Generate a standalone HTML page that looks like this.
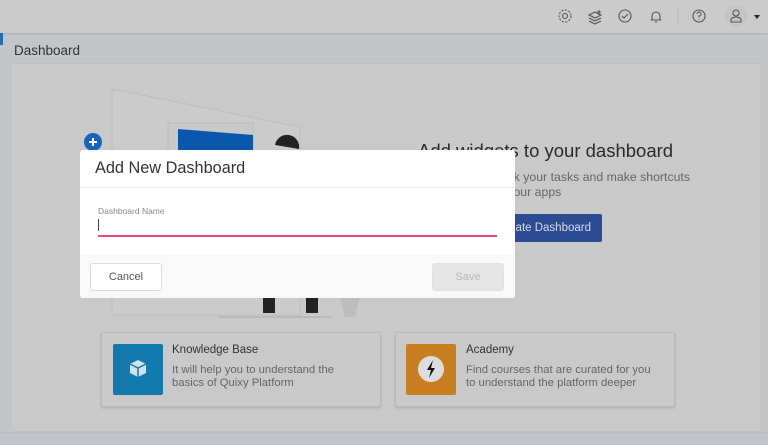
<!DOCTYPE html>
<html><head><meta charset="utf-8"><style>
*{margin:0;padding:0;box-sizing:border-box}
body{width:768px;height:445px;overflow:hidden;background:#c3c6c9;font-family:"Liberation Sans",sans-serif;position:relative}
.abs{position:absolute}
.hdr{left:0;top:0;width:768px;height:33px;background:#cbcbcb;box-shadow:0 1px 2px rgba(0,0,0,.12)}
.card{left:10px;top:63px;width:752px;height:369px;background:#c9c9c9;border:1px solid #c0c0c0;border-radius:3px}
.t{color:#333}
.tile{background:#c9c9c9;border:1px solid #b9b9b9;box-shadow:0 1px 2px rgba(0,0,0,.15);border-radius:2px}
.dlg{left:80px;top:150px;width:435px;height:148px;background:#fff;border-radius:3px}
</style></head><body>
<div class="abs hdr"></div>
<div class="abs" style="left:0;top:33px;width:3px;height:12px;background:#1f6fb5"></div>
<svg class="abs" style="left:550px;top:6px" width="218" height="22" viewBox="0 0 218 22" fill="none" stroke="#555" stroke-width="1.1">
<circle cx="15" cy="10" r="6" stroke-dasharray="2 1.5"/><circle cx="15" cy="10" r="2.5"/>
<path d="M39 9l6-3 6 3-6 3z M39 12l6 3 6-3 M39 15l6 3 6-3 M49 4v5 M47 6h4"/>
<circle cx="75" cy="10" r="6"/><path d="M72 10l2 2 4-4"/>
<path d="M101 14h10 M102 14v-4a4 4 0 0 1 8 0v4 M105 16h2"/>
<path d="M128 3v15" stroke="#bbb"/>
<circle cx="149" cy="10" r="6"/><path d="M147 8a2 2 0 1 1 2 2v1.5 M149 13v.5"/>
<circle cx="186" cy="10" r="11" fill="#c4c4c4" stroke="none"/>
<circle cx="186" cy="7" r="3"/><path d="M181 16v-2a5 3 0 0 1 10 0v2z"/>
<path d="M204 9h6l-3 4z" fill="#222" stroke="none"/>
</svg>
<div class="abs t" style="left:14px;top:43px;font-size:13.5px">Dashboard</div>
<div class="abs card"></div>
<svg class="abs" style="left:80px;top:85px" width="330" height="240">
<path d="M32 4 L220 42 L220 230 L32 230 Z" fill="#cbcbcb" stroke="#bdbdbd"/>
<rect x="88" y="38" width="85" height="60" fill="#c9c9c9" stroke="#bbb"/>
<path d="M98 44 L173 50 L173 70 L98 70Z" fill="#0b57ad"/>
<circle cx="13" cy="57" r="9" fill="#1565c0"/><path d="M9 57h8M13 53v8" stroke="#fff" stroke-width="2"/>
<path d="M195 60a12 12 0 0 1 24 4z" fill="#222"/>
<rect x="183" y="213" width="12" height="15" fill="#222"/><rect x="226" y="213" width="12" height="15" fill="#222"/>
<path d="M138 232h113" stroke="#aaa"/>
<path d="M260 212h20l-5 20h-10z" fill="#bdbdbd"/>
</svg>
<div class="abs" style="left:418px;top:140px;font-size:18.5px;color:#2a2a2a;white-space:nowrap">Add widgets to your dashboard</div>
<div class="abs" style="right:78px;top:170px;font-size:12.3px;color:#666;line-height:15px;white-space:nowrap">Track your tasks and make shortcuts<br>for your apps</div>
<div class="abs" style="left:460px;top:214px;width:142px;height:28px;background:#2d4b93;border-radius:2px;color:#d6dbe8;font-size:11.5px;line-height:28px;text-align:right;padding-right:11px">Create Dashboard</div>
<div class="abs tile" style="left:101px;top:332px;width:280px;height:75px"></div>
<div class="abs" style="left:113px;top:344px;width:50px;height:51px;background:#137ab0;border-radius:2px"></div>
<svg class="abs" style="left:126px;top:357px" width="24" height="24"><path d="M12 3l8 4v9l-8 4-8-4V7z" fill="#cfe4f0"/><path d="M4 7l8 4 8-4M12 11v9" stroke="#137ab0" stroke-width="1.5" fill="none"/></svg>
<div class="abs t" style="left:172px;top:344px;font-size:11.5px">Knowledge Base</div>
<div class="abs" style="left:172px;top:364px;font-size:11.3px;color:#666;line-height:13px;white-space:nowrap">It will help you to understand the<br>basics of Quixy Platform</div>
<div class="abs tile" style="left:395px;top:332px;width:280px;height:75px"></div>
<div class="abs" style="left:406px;top:344px;width:50px;height:51px;background:#c97e22;border-radius:2px"></div>
<svg class="abs" style="left:416px;top:354px" width="30" height="30"><circle cx="15" cy="15" r="13" fill="#ddd"/><path d="M17 6l-6 10h4l-2 8 6-10h-4z" fill="#111"/></svg>
<div class="abs t" style="left:466px;top:344px;font-size:11.5px">Academy</div>
<div class="abs" style="left:466px;top:364px;font-size:11.3px;color:#666;line-height:13px;white-space:nowrap">Find courses that are curated for you<br>to understand the platform deeper</div>
<div class="abs" style="left:0;top:432px;width:768px;height:13px;background:#c0c4c8;border-top:1px solid #b8bcc0"></div>
<div class="abs dlg">
 <div class="abs" style="left:15px;top:9px;font-size:16.3px;color:#333">Add New Dashboard</div>
 <div class="abs" style="left:0;top:37px;width:435px;height:1px;background:#eee"></div>
 <div class="abs" style="left:18px;top:56px;font-size:8.5px;color:#888">Dashboard Name</div>
 <div class="abs" style="left:18px;top:69px;width:1px;height:12px;background:#444"></div>
 <div class="abs" style="left:18px;top:85px;width:399px;height:2px;background:#e9487d"></div>
 <div class="abs" style="left:0;top:104px;width:435px;height:44px;background:#f9f9f9;border-radius:0 0 3px 3px"></div>
 <div class="abs" style="left:10px;top:113px;width:72px;height:28px;border:1px solid #ddd;border-radius:3px;background:#fff;font-size:11px;color:#555;text-align:center;line-height:26px">Cancel</div>
 <div class="abs" style="left:352px;top:113px;width:72px;height:28px;border:1px solid #e2e2e2;border-radius:3px;background:#e6e6e6;font-size:11px;color:#bbb;text-align:center;line-height:26px">Save</div>
</div>
</body></html>
